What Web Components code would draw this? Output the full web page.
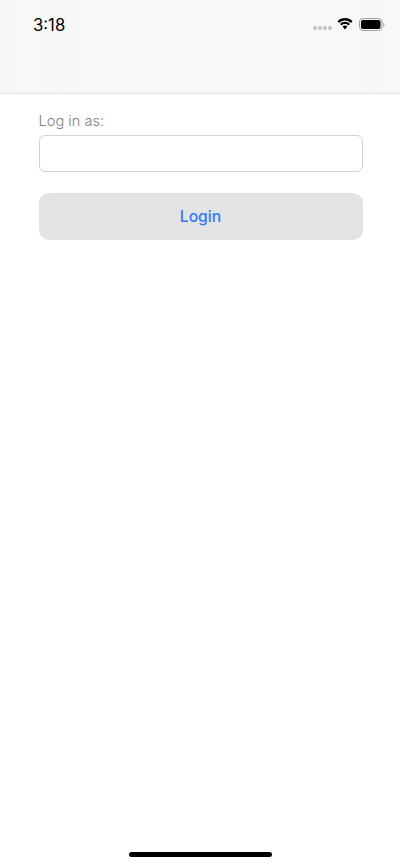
<!DOCTYPE html>
<html>
<head>
<meta charset="utf-8">
<title>Login</title>
<style>
    html, body { margin: 0; padding: 0; height: 100%; background: #fff; }
    body { font-family: Inter, "Liberation Sans", sans-serif; }
</style>
</head>
<body>
<app-screen>
    <nav-header slot="header"></nav-header>
    <login-form></login-form>
</app-screen>
<script>
class AppScreen extends HTMLElement {
    connectedCallback() {
        this.attachShadow({ mode: 'open' });
        this.shadowRoot.innerHTML = `
            <style>
                :host {
                    display: flex;
                    flex-direction: column;
                    width: 400px;
                    height: 866px;
                    overflow: hidden;
                    background: #fff;
                }
                .content { flex: 1; }
                .home-bar {
                    display: flex;
                    justify-content: center;
                    height: 14px;
                }
                .home-bar span {
                    display: block;
                    width: 143px;
                    height: 5px;
                    border-radius: 3px;
                    background: #000;
                }
            </style>
            <slot name="header"></slot>
            <div class="content"><slot></slot></div>
            <div class="home-bar"><span></span></div>
        `;
    }
}
customElements.define('app-screen', AppScreen);

class NavHeader extends HTMLElement {
    connectedCallback() {
        this.attachShadow({ mode: 'open' });
        this.shadowRoot.innerHTML = `
            <style>
                :host {
                    display: block;
                    box-sizing: border-box;
                    height: 94px;
                    background: linear-gradient(90deg, #f8f8f8 0, #f6f6f6 10px, #f8f8f8 20px, #f7f7f7 60px, #f8f8f8 100px, #f8f8f8 360px, #f6f6f6 372px, #f8f8f8 384px);
                    border-bottom: 1px solid #e2e2e2;
                }
                .status {
                    display: flex;
                    align-items: center;
                    justify-content: space-between;
                    height: 16px;
                    padding: 17px 15px 0 33px;
                }
                .time {
                    font: 400 16.7px Inter, "Liberation Sans", sans-serif;
                    color: #000;
                }
                .icons {
                    display: flex;
                    align-items: center;
                    gap: 5px;
                }
                svg { display: block; }
                .dots { margin: 6px 0 0 0; }
                .wifi { margin: 0 1px 2px 0; }
                .battery { margin-bottom: 2px; }
            </style>
            <div class="status">
                <span class="time">3:18</span>
                <div class="icons">
                    <svg class="dots" width="19" height="6" viewBox="0 0 19 6">
                        <g fill="#bdbdbd">
                            <circle cx="2" cy="3" r="1.9"/>
                            <circle cx="7" cy="3" r="1.9"/>
                            <circle cx="12" cy="3" r="1.9"/>
                            <circle cx="17" cy="3" r="1.9"/>
                        </g>
                    </svg>
                    <svg class="wifi" width="16" height="12" viewBox="0 0 16 12">
                        <path d="M8 2.5c2.300 0 4.400.9 5.900 2.400l1.600-1.600C13.600 1.300 10.900.1 8 .1S2.400 1.300.5 3.300l1.600 1.600C3.600 3.400 5.700 2.500 8 2.500z" fill="#000"/>
                        <path d="M8 6c1.300 0 2.500.5 3.400 1.400l1.500-1.500C11.600 4.600 9.900 3.800 8 3.800s-3.600.8-4.900 2.100l1.500 1.500C5.500 6.500 6.700 6 8 6z" fill="#000"/>
                        <path d="M8 7.500c-1 0-1.800.4-2.400 1L8 11.500l2.400-3c-.6-.6-1.400-1-2.400-1z" fill="#000"/>
                    </svg>
                    <svg class="battery" width="26" height="13" viewBox="0 0 26 13">
                        <rect x=".5" y=".5" width="22.500" height="12" rx="3.500" fill="none" stroke="#a0a0a0"/>
                        <rect x="2" y="2" width="19.500" height="9" rx="2" fill="#000"/>
                        <path d="M24.200 4.500v4c.8-.3 1.300-1.100 1.300-2s-.5-1.700-1.300-2z" fill="#a8a8a8"/>
                    </svg>
                </div>
            </div>
        `;
    }
}
customElements.define('nav-header', NavHeader);

class LoginForm extends HTMLElement {
    connectedCallback() {
        this.attachShadow({ mode: 'open' });
        this.shadowRoot.innerHTML = `
            <style>
                :host {
                    display: block;
                    padding: 17px 37.5px 0 38.5px;
                    font-family: Inter, "Liberation Sans", sans-serif;
                }
                label {
                    display: block;
                    height: 24px;
                    font-size: 14.6px;
                    font-weight: 300;
                    line-height: 21px;
                    color: #7f7f7f;
                }
                .field {
                    box-sizing: border-box;
                    display: block;
                    width: 324px;
                    height: 37px;
                    margin: 0 0 21px 0;
                    background: #fff;
                    border: 1.5px solid #d2d2d2;
                    border-radius: 6px;
                    outline: none;
                }
                button {
                    display: block;
                    width: 324px;
                    height: 47px;
                    padding: 0;
                    border: 0;
                    border-radius: 10px;
                    background: #e3e3e5;
                    color: #3478f6;
                    font: 500 15.7px Inter, "Liberation Sans", sans-serif;
                }
            </style>
            <label for="who">Log in as:</label>
            <input class="field" id="who" type="text">
            <button type="button">Login</button>
        `;
    }
}
customElements.define('login-form', LoginForm);
</script>
</body>
</html>
